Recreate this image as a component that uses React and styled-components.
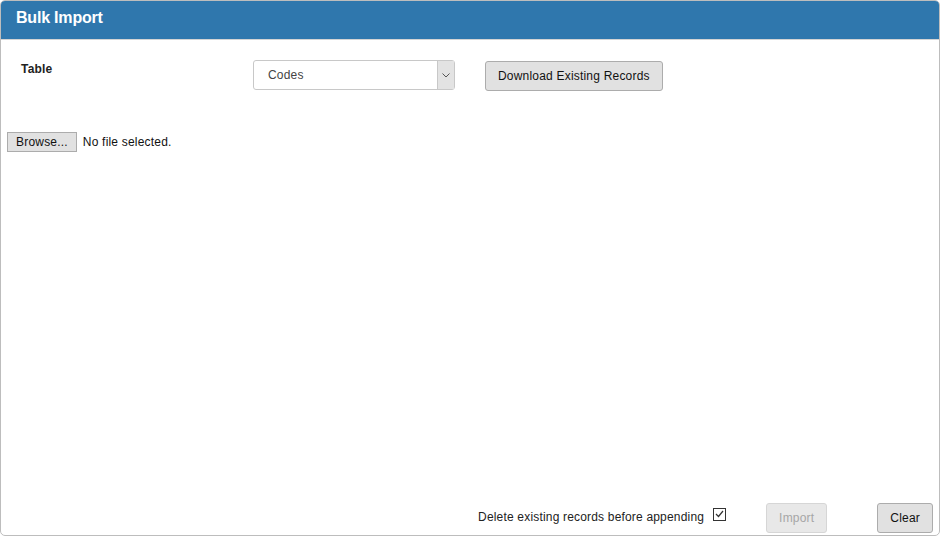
import React from "react";
import styled, { createGlobalStyle } from "styled-components";

const GlobalStyle = createGlobalStyle`
  html, body {
    margin: 0;
    padding: 0;
    background: #fff;
    font-family: "Liberation Sans", Arial, sans-serif;
  }
`;

const Panel = styled.div`
  width: 940px;
  height: 536px;
  box-sizing: border-box;
  border: 1px solid #bdbdbd;
  border-radius: 5px;
  display: flex;
  flex-direction: column;
  overflow: hidden;
  letter-spacing: 0.2px;
`;

const Header = styled.div`
  height: 39px;
  flex-shrink: 0;
  box-sizing: border-box;
  background: #2f77ad;
  border-bottom: 1px solid #d4d4d4;
  color: #fff;
  font-size: 16px;
  font-weight: 700;
  padding: 8px 0 0 15px;
  letter-spacing: -0.2px;
`;

const Body = styled.div`
  flex: 1;
  display: flex;
  flex-direction: column;
  padding: 20px 6px 2px 6px;
`;

const TableRow = styled.div`
  display: flex;
  align-items: flex-start;
`;

const Label = styled.div`
  width: 246px;
  box-sizing: border-box;
  padding: 2px 0 0 14px;
  font-size: 12px;
  font-weight: 700;
  color: #222;
`;

const Select = styled.div`
  width: 202px;
  height: 30px;
  box-sizing: border-box;
  border: 1px solid #c8c8c8;
  border-radius: 3px;
  display: flex;
  font-size: 12px;
  color: #444;
`;

const SelectValue = styled.div`
  flex: 1;
  padding: 7px 0 0 14px;
`;

const SelectArrow = styled.div`
  width: 16px;
  background: #e3e3e3;
  border-left: 1px solid #c8c8c8;
  display: flex;
  align-items: center;
  justify-content: center;
`;

const Button = styled.button`
  font-family: "Liberation Sans", Arial, sans-serif;
  font-size: 12px;
  letter-spacing: 0.2px;
  height: ${(p) => p.$h || 30}px;
  padding: 0 ${(p) => p.$px || 12}px;
  background: ${(p) => (p.disabled ? "#e8e8e8" : "#e1e1e1")};
  color: ${(p) => (p.disabled ? "#a6a6a6" : "#111")};
  border: 1px solid ${(p) => (p.disabled ? "#d6d6d6" : "#acacac")};
  border-radius: ${(p) => (p.$flat ? 0 : 3)}px;
  margin-left: ${(p) => p.$ml || 0}px;
  margin-top: ${(p) => p.$mt || 0}px;
  cursor: default;
`;

const FileRow = styled.div`
  display: flex;
  align-items: center;
  margin-top: 41px;
  font-size: 12px;
  color: #111;
`;

const FileText = styled.span`
  margin-left: 6px;
`;

const Footer = styled.div`
  margin-top: auto;
  display: flex;
  align-items: center;
  justify-content: flex-end;
`;

const CheckLabel = styled.span`
  font-size: 12px;
  color: #222;
  margin-top: -2px;
  letter-spacing: 0.18px;
`;

const CheckBox = styled.span`
  width: 11px;
  height: 11px;
  border: 1px solid #333;
  margin: -8px 0 0 9px;
  display: flex;
  align-items: center;
  justify-content: center;
`;

export default function App() {
  return (
    <>
      <GlobalStyle />
      <Panel>
        <Header>Bulk Import</Header>
        <Body>
          <TableRow>
            <Label>Table</Label>
            <Select>
              <SelectValue>Codes</SelectValue>
              <SelectArrow>
                <svg width="8" height="5" viewBox="0 0 8 5">
                  <path d="M0.5 0.5 L4 4 L7.5 0.5" fill="none" stroke="#555" strokeWidth="1" />
                </svg>
              </SelectArrow>
            </Select>
            <Button $ml={30} $mt={1} $px={12}>Download Existing Records</Button>
          </TableRow>
          <FileRow>
            <Button $h={20} $px={8} $flat>Browse...</Button>
            <FileText>No file selected.</FileText>
          </FileRow>
          <Footer>
            <CheckLabel>Delete existing records before appending</CheckLabel>
            <CheckBox>
              <svg width="9" height="8" viewBox="0 0 9 8">
                <path d="M1 4 L3.5 6.5 L8 1" fill="none" stroke="#333" strokeWidth="1.2" />
              </svg>
            </CheckBox>
            <Button disabled $ml={40} $px={12}>Import</Button>
            <Button $ml={50} $px={12}>Clear</Button>
          </Footer>
        </Body>
      </Panel>
    </>
  );
}
